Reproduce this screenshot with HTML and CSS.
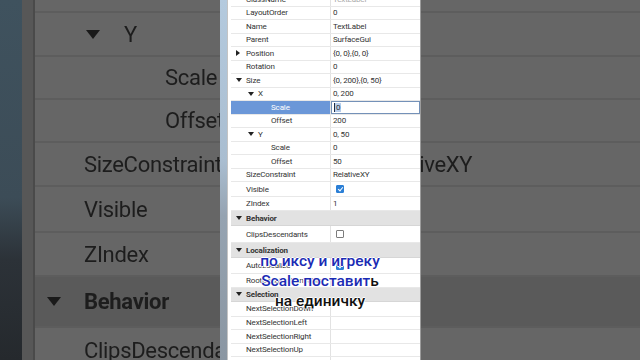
FILE: index.html
```html
<!DOCTYPE html>
<html lang="ru">
  <head>
    <meta charset="UTF-8" />
    <meta name="viewport" content="width=device-width, initial-scale=1.0" />
    <title>Properties - TextLabel</title>
    <link rel="stylesheet" href="styles.css">
  </head>
  <body>
    <div class="screen">
      <!-- blurred, zoomed copy of the panel behind the video frame -->
      <div class="backdrop">
        <div class="bd-edge"></div>
        <div class="bd-gutter"></div>
        <div class="bd-panel">
          <div class="bd-row h43"><div class="bd-name d2">Offset</div><div class="bd-value">200</div></div>
          <div class="bd-row h44"><div class="bd-name d1"><span class="bd-caret"><i class="tri-down big"></i></span>Y</div><div class="bd-value">0, 50</div></div>
          <div class="bd-row h43"><div class="bd-name d2">Scale</div><div class="bd-value">0</div></div>
          <div class="bd-row h43"><div class="bd-name d2">Offset</div><div class="bd-value">50</div></div>
          <div class="bd-row h44"><div class="bd-name d0">SizeConstraint</div><div class="bd-value">RelativeXY</div></div>
          <div class="bd-row h46"><div class="bd-name d0">Visible</div><div class="bd-value"></div></div>
          <div class="bd-row h44"><div class="bd-name d0">ZIndex</div><div class="bd-value">1</div></div>
          <div class="bd-row bd-cat h51"><div class="bd-name dc"><span class="bd-caret"><i class="tri-down big"></i></span>Behavior</div></div>
          <div class="bd-row h47"><div class="bd-name d0">ClipsDescendants</div><div class="bd-value"></div></div>
        </div>
      </div>

      <!-- the actual video frame -->
      <div class="panel">
        <div class="panel-edge"></div>
        <div class="props">
          <div class="prop first"><div class="name n0"><span class="caret"></span>ClassName</div><div class="value muted">TextLabel</div></div>
          <div class="prop"><div class="name n0"><span class="caret"></span>LayoutOrder</div><div class="value">0</div></div>
          <div class="prop"><div class="name n0"><span class="caret"></span>Name</div><div class="value">TextLabel</div></div>
          <div class="prop"><div class="name n0"><span class="caret"></span>Parent</div><div class="value">SurfaceGui</div></div>
          <div class="prop"><div class="name n0"><span class="caret"><i class="tri-right"></i></span>Position</div><div class="value">{0, 0},{0, 0}</div></div>
          <div class="prop"><div class="name n0"><span class="caret"></span>Rotation</div><div class="value">0</div></div>
          <div class="prop"><div class="name n0"><span class="caret"><i class="tri-down"></i></span>Size</div><div class="value">{0, 200},{0, 50}</div></div>
          <div class="prop"><div class="name n1"><span class="caret"><i class="tri-down"></i></span>X</div><div class="value">0, 200</div></div>
          <div class="prop sel"><div class="name n2">Scale</div><div class="value"><div class="input"><span class="cursor">0</span></div></div></div>
          <div class="prop"><div class="name n2">Offset</div><div class="value">200</div></div>
          <div class="prop"><div class="name n1"><span class="caret"><i class="tri-down"></i></span>Y</div><div class="value">0, 50</div></div>
          <div class="prop"><div class="name n2">Scale</div><div class="value">0</div></div>
          <div class="prop"><div class="name n2">Offset</div><div class="value">50</div></div>
          <div class="prop"><div class="name n0"><span class="caret"></span>SizeConstraint</div><div class="value">RelativeXY</div></div>
          <div class="prop h15"><div class="name n0"><span class="caret"></span>Visible</div><div class="value"><span class="check on"></span></div></div>
          <div class="prop h14"><div class="name n0"><span class="caret"></span>ZIndex</div><div class="value">1</div></div>
          <div class="prop cat h15"><div class="name n0"><span class="caret"><i class="tri-down"></i></span>Behavior</div></div>
          <div class="prop h17"><div class="name n0"><span class="caret"></span>ClipsDescendants</div><div class="value"><span class="check"></span></div></div>
          <div class="prop cat h15"><div class="name n0"><span class="caret"><i class="tri-down"></i></span>Localization</div></div>
          <div class="prop h16"><div class="name n0"><span class="caret"></span>AutoLocalize</div><div class="value"><span class="check on"></span></div></div>
          <div class="prop"><div class="name n0"><span class="caret"></span>RootLocalizationTable</div><div class="value"></div></div>
          <div class="prop cat h145"><div class="name n0"><span class="caret"><i class="tri-down"></i></span>Selection</div></div>
          <div class="prop h145"><div class="name n0"><span class="caret"></span>NextSelectionDown</div><div class="value"></div></div>
          <div class="prop"><div class="name n0"><span class="caret"></span>NextSelectionLeft</div><div class="value"></div></div>
          <div class="prop"><div class="name n0"><span class="caret"></span>NextSelectionRight</div><div class="value"></div></div>
          <div class="prop"><div class="name n0"><span class="caret"></span>NextSelectionUp</div><div class="value"></div></div>
          <div class="prop"><div class="name n0"><span class="caret"></span>Selectable</div><div class="value"></div></div>
        </div>
      </div>

      <div class="captions">
        <p class="spoken">по иксу и игреку</p>
        <p><span class="spoken">Scale поставит</span>ь</p>
        <p>на единичку</p>
      </div>
    </div>
  </body>
</html>
```

FILE: styles.css
```css
* {
  margin: 0;
  padding: 0;
  box-sizing: border-box;
}
body {
  width: 640px;
  height: 360px;
  overflow: hidden;
  background: #2e3439;
}
.screen {
  position: relative;
  width: 640px;
  height: 360px;
  overflow: hidden;
}

/* backdrop */
.backdrop {
  display: flex;
  width: 640px;
  height: 360px;
}
.bd-edge {
  width: 22px;
  background: linear-gradient(#3f525e, #3c4c57 55%, #2c3238 72%, #25292d);
}
.bd-gutter {
  width: 13px;
  background: #575757;
  border-right: 2px solid #4a4a4a;
}
.bd-panel {
  flex: 1;
  display: flex;
  flex-direction: column;
  margin-top: -30px;
  background: #666;
  font-family: Roboto, sans-serif;
  font-size: 22px;
  letter-spacing: -0.3px;
  color: #1d1d1d;
  filter: blur(0.6px);
}
.bd-row {
  display: flex;
  align-items: center;
  flex-shrink: 0;
  border-bottom: 2px solid #5d5d5d;
}
.bd-cat {
  background: #5a5a5a;
  font-weight: bold;
}
.h43 { height: 43px; }
.h44 { height: 44px; }
.h46 { height: 46px; }
.h47 { height: 47px; }
.h51 { height: 51px; }
.bd-name {
  width: 336px;
  display: flex;
  align-items: center;
}
.bd-name.d0 { padding-left: 49px; }
.bd-name.dc { padding-left: 12px; }
.bd-name.d1 { padding-left: 51px; }
.bd-name.d2 { padding-left: 130px; }
.bd-caret {
  width: 38px;
  display: flex;
  align-items: center;
}
.bd-name.dc .bd-caret { width: 37px; }

/* triangles */
.tri-down {
  display: block;
  width: 0;
  height: 0;
  border-left: 3px solid transparent;
  border-right: 3px solid transparent;
  border-top: 4px solid #222;
}
.tri-down.big {
  border-left-width: 7px;
  border-right-width: 7px;
  border-top: 9px solid #1a1a1a;
}
.tri-right {
  display: block;
  width: 0;
  height: 0;
  border-top: 3px solid transparent;
  border-bottom: 3px solid transparent;
  border-left: 4px solid #222;
}

/* video frame panel */
.panel {
  position: absolute;
  left: 220px;
  top: 0;
  width: 201px;
  height: 360px;
  display: flex;
  background: #fff;
  border-right: 1px solid #9c9c9c;
}
.panel-edge {
  width: 8px;
  margin-right: 3px;
  background: linear-gradient(#b4cade, #a9bdd0 45%, #95a3b1 60%, #8a96a2);
  border-right: 1px solid #c4c4c4;
}
.props {
  flex: 1;
  display: flex;
  flex-direction: column;
  font-family: Roboto, sans-serif;
  font-size: 8px;
  letter-spacing: -0.15px;
  color: #333;
}
.prop {
  display: flex;
  height: 13.5px;
  flex-shrink: 0;
  border-bottom: 1px solid #e8e8e8;
}
.prop.first { margin-top: -7px; }
.h14 { height: 14px; }
.h145 { height: 14.5px; }
.h15 { height: 15px; }
.h16 { height: 16px; }
.h17 { height: 17px; }
.prop .name {
  width: 100px;
  display: flex;
  align-items: center;
  border-right: 1px solid #e2e2e2;
  white-space: nowrap;
  overflow: hidden;
}
.name.n0 { padding-left: 5px; }
.name.n1 { padding-left: 17px; }
.name.n2 { padding-left: 40px; }
.caret {
  width: 10px;
  display: flex;
  align-items: center;
}
.prop .value {
  flex: 1;
  display: flex;
  align-items: center;
  padding-left: 2px;
}
.value.muted { color: #a8a8a8; }
.prop.cat {
  background: #e2e2e2;
  font-weight: bold;
  border-bottom-color: #d6d6d6;
}
.prop.cat .name {
  border-right: none;
}
.prop.sel .name {
  background: #6b97d8;
  color: #fff;
}
.prop.sel .value {
  padding-left: 0;
}
.input {
  flex: 1;
  height: 100%;
  display: flex;
  align-items: center;
  padding-left: 2px;
  background: #fff;
  border: 1px solid #7491b8;
}
.cursor {
  background: #b7cdeb;
  border-left: 1px solid #1d2a44;
  padding: 0 1px;
  line-height: 9px;
}
.check {
  width: 8px;
  height: 8px;
  margin-left: 3px;
  border: 1px solid #7c7c7c;
  border-radius: 1px;
  background: #fff;
  position: relative;
}
.check.on {
  background: #2b7fd6;
  border-color: #2b7fd6;
}
.check.on::after {
  content: "";
  position: absolute;
  left: 1.5px;
  top: 0;
  width: 2px;
  height: 4px;
  border-right: 1.3px solid #fff;
  border-bottom: 1.3px solid #fff;
  transform: rotate(40deg);
}

/* subtitles */
.captions {
  position: absolute;
  left: 220px;
  top: 251px;
  width: 200px;
  text-align: center;
  font-family: Roboto, "Liberation Sans", sans-serif;
  font-size: 15.5px;
  font-weight: 500;
  line-height: 20px;
  color: #111;
  text-shadow: 1px 0 0 #fff, -1px 0 0 #fff, 0 1px 0 #fff, 0 -1px 0 #fff;
}
.spoken {
  color: #1b2bb4;
}
```
